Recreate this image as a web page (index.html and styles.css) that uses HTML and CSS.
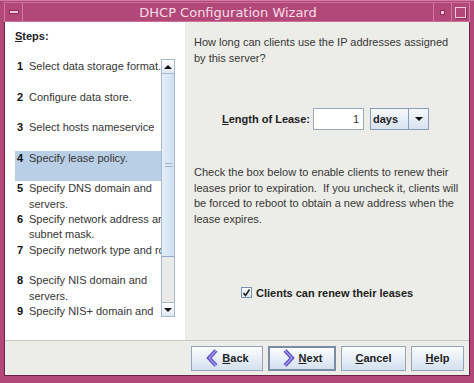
FILE: index.html
```html
<!DOCTYPE html>
<html lang="en">
<head>
    <meta charset="UTF-8">
    <meta name="viewport" content="width=device-width, initial-scale=1.0">
    <title>DHCP Configuration Wizard</title>
    <link rel="stylesheet" href="styles.css">
</head>
<body>
    <div class="frame">
        <div class="titlebar">
            <span class="tb-btn tb-menu"><span class="dash"></span></span>
            <span class="title">DHCP Configuration Wizard</span>
            <span class="tb-btn tb-min"><span class="dot"></span></span>
            <span class="tb-btn tb-max"><span class="sq"></span></span>
        </div>
        <div class="client">
            <div class="main">
                <div class="steps">
                    <div class="steps-head"><u>S</u>teps:</div>
                    <div class="list">
                        <div class="items">
                            <div class="item"><b>1</b><span>Select data storage format.</span></div>
                            <div class="item"><b>2</b><span>Configure data store.</span></div>
                            <div class="item"><b>3</b><span>Select hosts nameservice</span></div>
                            <div class="item selected"><b>4</b><span>Specify lease policy.</span></div>
                            <div class="item"><b>5</b><span>Specify DNS domain and<br>servers.</span></div>
                            <div class="item"><b>6</b><span>Specify network address and<br>subnet mask.</span></div>
                            <div class="item"><b>7</b><span>Specify network type and router.</span></div>
                            <div class="item"><b>8</b><span>Specify NIS domain and<br>servers.</span></div>
                            <div class="item"><b>9</b><span>Specify NIS+ domain and</span></div>
                        </div>
                        <div class="scrollbar">
                            <div class="sb-btn up"><span class="tri-up"></span></div>
                            <div class="sb-thumb"><span class="grip"></span></div>
                            <div class="sb-track"></div>
                            <div class="sb-btn down"><span class="tri-down"></span></div>
                        </div>
                    </div>
                </div>

                <div class="content">
                    <p class="question">How long can clients use the IP addresses assigned<br>by this server?</p>

                    <div class="lease-row">
                        <label class="lease-label"><u>L</u>ength of Lease:</label>
                        <div class="lease-input">1</div>
                        <div class="combo">
                            <span class="combo-value">days</span>
                            <span class="combo-arrow"><span class="tri-down"></span></span>
                        </div>
                    </div>

                    <p class="info">Check the box below to enable clients to renew their<br>leases prior to expiration.&nbsp; If you uncheck it, clients will<br>be forced to reboot to obtain a new address when the<br>lease expires.</p>

                    <div class="renew-row">
                        <span class="checkbox">
                            <svg width="9" height="9" viewBox="0 0 9 9"><path d="M1.5 5 L3.5 7.5 L7.5 1.5" fill="none" stroke="#222" stroke-width="1.6"/></svg>
                        </span>
                        <span class="renew-label">Clients can renew their leases</span>
                    </div>
                </div>
            </div>

            <div class="buttons">
                <button class="btn btn-back">
                    <svg width="14" height="18" viewBox="0 0 14 18"><path d="M11 1.5 L4 9 L11 16.5" fill="none" stroke="#5a4cc4" stroke-width="4"/><path d="M11 1.5 L4 9 L11 16.5" fill="none" stroke="#aaa3ee" stroke-width="1.2"/></svg>
                    <span><u>B</u>ack</span>
                </button>
                <button class="btn btn-next">
                    <svg width="14" height="18" viewBox="0 0 14 18"><path d="M3 1.5 L10 9 L3 16.5" fill="none" stroke="#5a4cc4" stroke-width="4"/><path d="M3 1.5 L10 9 L3 16.5" fill="none" stroke="#aaa3ee" stroke-width="1.2"/></svg>
                    <span><u>N</u>ext</span>
                </button>
                <button class="btn btn-cancel"><span><u>C</u>ancel</span></button>
                <button class="btn btn-help"><span><u>H</u>elp</span></button>
            </div>
        </div>
    </div>
</body>
</html>
```

FILE: styles.css
```css
body {
    margin: 0;
    font-family: "Liberation Sans", Arial, sans-serif;
    font-size: 11px;
    color: #363636;
    background: #b24878;
}
.frame {
    width: 474px;
    height: 383px;
    box-sizing: border-box;
    background: #b24878;
    border-top: 1px solid #d57aa4;
    padding: 1px 4px 7px 4px;
    display: flex;
    flex-direction: column;
}
.titlebar {
    height: 18px;
    flex: none;
    display: flex;
    align-items: stretch;
    border-top: 1px solid #cf6e9a;
    border-bottom: 1px solid #cf6e9a;
}
.tb-btn {
    width: 17px;
    display: flex;
    align-items: center;
    justify-content: center;
    border-right: 1px solid #d27aa3;
}
.tb-menu {
    border-left: 1px solid #d27aa3;
}
.tb-min {
    border-left: 1px solid #d27aa3;
}
.dash {
    width: 8px;
    height: 2px;
    background: #f0c8dc;
    border: 1px solid #8e2c5a;
}
.dot {
    width: 3px;
    height: 3px;
    background: #f0c8dc;
    border: 1px solid #8e2c5a;
}
.sq {
    width: 9px;
    height: 9px;
    border: 1px solid #f0c8dc;
    box-shadow: 1px 1px 0 #8e2c5a;
}
.title {
    flex: 1;
    text-align: center;
    font-family: "DejaVu Sans", sans-serif;
    font-size: 13px;
    line-height: 19px;
    color: #f6dce9;
}
.client {
    flex: 1;
    min-height: 0;
    display: flex;
    flex-direction: column;
    background: #ecede8;
    border-left: 1px solid #6e2246;
    border-right: 1px solid #6e2246;
    border-bottom: 1px solid #6e2246;
}
.main {
    flex: 1;
    display: flex;
    min-height: 0;
}
.steps {
    width: 180px;
    flex: none;
    background: #fff;
    padding-left: 10px;
    box-sizing: border-box;
}
.steps-head {
    font-weight: bold;
    color: #222;
    padding-top: 7px;
    height: 28px;
    box-sizing: border-box;
    line-height: 14px;
}
.list {
    display: flex;
    width: 160px;
    height: 258px;
    margin-top: 9px;
}
.items {
    flex: 1;
    overflow: hidden;
}
.item {
    height: 30.6px;
    box-sizing: border-box;
    padding-left: 2px;
    display: flex;
    white-space: nowrap;
    line-height: 15.5px;
}
.item b {
    width: 12px;
    flex: none;
    color: #111;
}
.item.selected {
    background: #b8cfe6;
}
.scrollbar {
    width: 14px;
    flex: none;
    display: flex;
    flex-direction: column;
    border: 1px solid #a9bad0;
    box-sizing: border-box;
    background: #eaebe9;
}
.sb-btn {
    height: 13px;
    flex: none;
    display: flex;
    align-items: center;
    justify-content: center;
    background: linear-gradient(#ffffff, #dfe7f0);
}
.sb-btn.up {
    border-bottom: 1px solid #a9bad0;
}
.sb-btn.down {
    border-top: 1px solid #a9bad0;
}
.sb-thumb {
    height: 182px;
    flex: none;
    background: linear-gradient(90deg, #e4eef8, #cfdff0);
    border-bottom: 1px solid #8ea9ca;
    display: flex;
    align-items: center;
    justify-content: center;
}
.grip {
    width: 7px;
    height: 2px;
    border-top: 1px solid #9fb2c9;
    border-bottom: 1px solid #9fb2c9;
}
.sb-track {
    flex: 1;
}
.tri-up {
    width: 0;
    height: 0;
    border-left: 4px solid transparent;
    border-right: 4px solid transparent;
    border-bottom: 4px solid #111;
}
.tri-down {
    width: 0;
    height: 0;
    border-left: 4px solid transparent;
    border-right: 4px solid transparent;
    border-top: 4px solid #111;
}
.content {
    flex: 1;
    padding: 12px 0 0 9px;
    overflow: hidden;
}
.question {
    margin: 0;
    line-height: 16px;
}
.lease-row {
    display: flex;
    align-items: center;
    margin-top: 42px;
    padding-left: 28px;
    height: 22px;
}
.lease-label {
    font-weight: bold;
    color: #222;
    width: 91px;
}
.lease-input {
    width: 51px;
    height: 22px;
    box-sizing: border-box;
    background: #fff;
    border: 1px solid #9aa8b8;
    text-align: right;
    padding-right: 4px;
    line-height: 20px;
}
.combo {
    margin-left: 6px;
    width: 59px;
    height: 22px;
    box-sizing: border-box;
    border: 1px solid #8b9db4;
    display: flex;
    background: linear-gradient(#f6f9fc, #d6e2ef);
}
.combo-value {
    flex: 1;
    font-weight: bold;
    color: #222;
    padding-left: 2px;
    line-height: 20px;
}
.combo-arrow {
    width: 19px;
    border-left: 1px solid #8b9db4;
    display: flex;
    align-items: center;
    justify-content: center;
}
.info {
    margin: 35px 0 0 0;
    line-height: 15.7px;
}
.renew-row {
    display: flex;
    align-items: center;
    margin-top: 59px;
    padding-left: 47px;
    gap: 4px;
}
.checkbox {
    width: 11px;
    height: 11px;
    box-sizing: border-box;
    border: 1px solid #7f90a8;
    background: linear-gradient(#fdfeff, #d8e3ef);
    display: flex;
    align-items: center;
    justify-content: center;
}
.renew-label {
    font-weight: bold;
    color: #222;
}
.buttons {
    height: 35px;
    flex: none;
    box-sizing: border-box;
    border-top: 1px solid #c6c8c4;
    display: flex;
    align-items: center;
    justify-content: flex-end;
    padding-right: 5px;
    gap: 5px;
}
.btn {
    height: 25px;
    box-sizing: border-box;
    border: 1px solid #95a6bb;
    background: linear-gradient(#fbfdff, #d3e0ee);
    font-family: "Liberation Sans", Arial, sans-serif;
    font-size: 11px;
    font-weight: bold;
    color: #222;
    display: flex;
    align-items: center;
    justify-content: center;
    gap: 3px;
    padding: 0;
}
.btn-back {
    width: 72px;
}
.btn-next {
    width: 68px;
    border: 2px solid #7a8ca4;
}
.btn-cancel {
    width: 65px;
}
.btn-help {
    width: 53px;
}
```
